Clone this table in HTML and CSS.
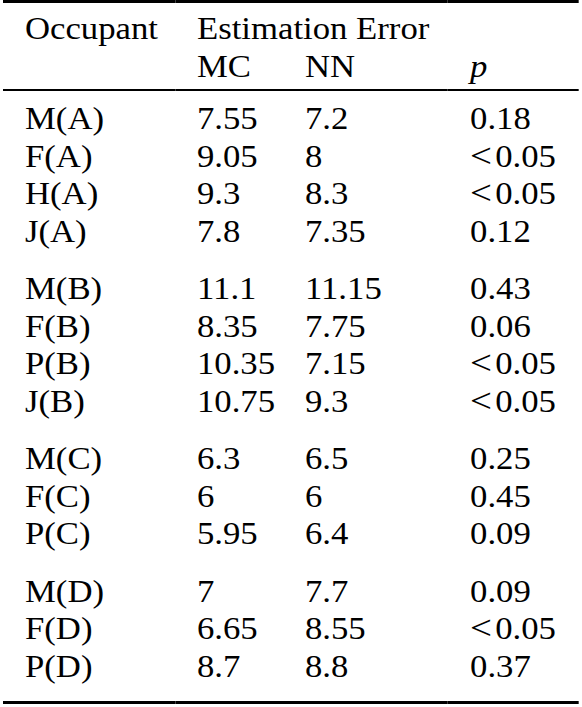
FILE: index.html
```html
<html>
	<head>
		<title>Estimation Error</title>
		<link rel="stylesheet" href="styles.css">
	</head>
	<body>
		<table class="results">
			<colgroup>
				<col class="c-occ">
				<col class="c-mc">
				<col class="c-nn">
				<col class="c-p">
			</colgroup>
			<thead>
				<tr class="head-top"><th>Occupant</th><th colspan="2">Estimation Error</th><th></th></tr>
				<tr class="head-sub"><th></th><th>MC</th><th>NN</th><th><i>p</i></th></tr>
			</thead>
			<tbody>
				<tr><td>M(A)</td><td>7.55</td><td>7.2</td><td>0.18</td></tr>
				<tr><td>F(A)</td><td>9.05</td><td>8</td><td><span class="lt">&lt;</span>0.05</td></tr>
				<tr><td>H(A)</td><td>9.3</td><td>8.3</td><td><span class="lt">&lt;</span>0.05</td></tr>
				<tr><td>J(A)</td><td>7.8</td><td>7.35</td><td>0.12</td></tr>
			</tbody>
			<tbody>
				<tr><td>M(B)</td><td>11.1</td><td>11.15</td><td>0.43</td></tr>
				<tr><td>F(B)</td><td>8.35</td><td>7.75</td><td>0.06</td></tr>
				<tr><td>P(B)</td><td>10.35</td><td>7.15</td><td><span class="lt">&lt;</span>0.05</td></tr>
				<tr><td>J(B)</td><td>10.75</td><td>9.3</td><td><span class="lt">&lt;</span>0.05</td></tr>
			</tbody>
			<tbody>
				<tr><td>M(C)</td><td>6.3</td><td>6.5</td><td>0.25</td></tr>
				<tr><td>F(C)</td><td>6</td><td>6</td><td>0.45</td></tr>
				<tr><td>P(C)</td><td>5.95</td><td>6.4</td><td>0.09</td></tr>
			</tbody>
			<tbody class="last">
				<tr><td>M(D)</td><td>7</td><td>7.7</td><td>0.09</td></tr>
				<tr><td>F(D)</td><td>6.65</td><td>8.55</td><td><span class="lt">&lt;</span>0.05</td></tr>
				<tr><td>P(D)</td><td>8.7</td><td>8.8</td><td>0.37</td></tr>
			</tbody>
		</table>
	</body>
</html>
```

FILE: styles.css
```css
body{
	margin:0;
	background:#fff;
}
/* the source table is set a bit wide, so stretch it sideways */
.results{
	margin:0 0 0 3px;
	width:514px;
	table-layout:fixed;
	border-collapse:collapse;
	color:#000;
	border-top:3px solid #000;
	border-bottom:3px solid #000;
	transform:scaleX(1.12);
	transform-origin:0 0;
}
.results th,
.results td{
	padding:0 0 0 19.6px;
	text-align:left;
	font-family:"Liberation Serif","Times New Roman",serif;
	font-size:31px;
	line-height:37.5px;
	font-weight:normal;
	white-space:nowrap;
}
.c-occ{width:153.6px;}
.c-mc{width:96.4px;}
.c-nn{width:147.4px;}
.c-p{width:116.6px;}
.results .head-top th{
	padding-top:7px;
}
.results .head-sub th{
	padding-bottom:4px;
	border-bottom:2px solid #000;
}
.results thead + tbody tr:first-child td{
	padding-top:9px;
}
.results tbody + tbody tr:first-child td{
	padding-top:20px;
}
.results tbody.last tr:last-child td{
	padding-bottom:16px;
}
.lt{
	display:inline-block;
	transform:scale(1.12);
	transform-origin:0 70%;
	margin-right:5px;
}
```
